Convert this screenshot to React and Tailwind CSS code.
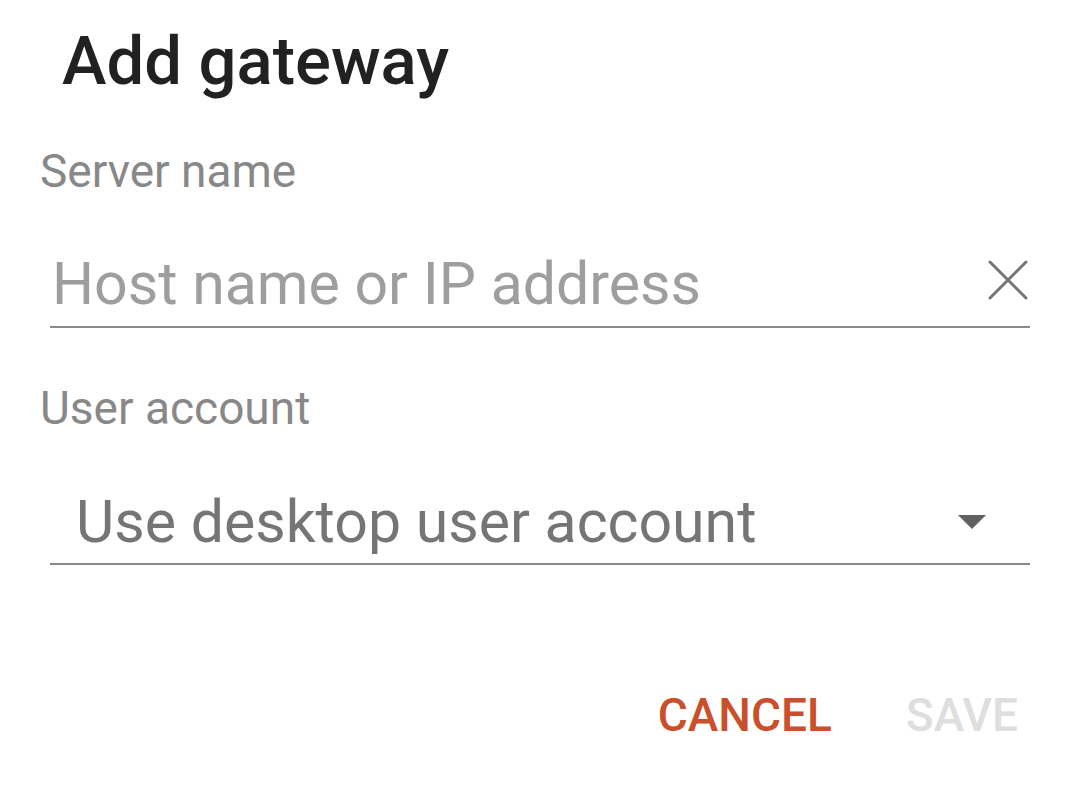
function ClearIcon() {
  return (
    <svg viewBox="0 0 40 40" className="h-[40px] w-[40px]" fill="none" stroke="#757575" strokeWidth="3" strokeLinecap="round">
      <path d="M2 2 L38 38 M38 2 L2 38" />
    </svg>
  )
}

function Caret() {
  return (
    <svg viewBox="0 0 28 14" className="h-[14px] w-[28px]" fill="#616161">
      <path d="M0 0 H28 L14 14 Z" />
    </svg>
  )
}

export default function App() {
  return (
    <div className="min-h-[796px] w-[1084px] bg-white font-['Roboto','Liberation_Sans',sans-serif]">
      <div className="flex flex-col pl-[40px] pr-[54px] pt-[28px]">
        <h1 className="ml-[22px] text-[67px] font-medium leading-[67px] text-[#212121]">
          Add gateway
        </h1>

        <label className="mt-[53px] text-[46px] leading-[46px] text-[#888888]">Server name</label>
        <div className="mt-[60px] ml-[10px] flex items-center justify-between border-b-2 border-[#8a8a8a] pb-[13px]">
          <span className="ml-[2px] text-[59px] leading-[59px] text-[#9e9e9e]">Host name or IP address</span>
          <span className="mr-[2px] -mt-[8px]">
            <ClearIcon />
          </span>
        </div>

        <label className="mt-[57px] text-[46px] leading-[46px] text-[#888888]">User account</label>
        <div className="mt-[61px] ml-[10px] flex items-center justify-between border-b-2 border-[#8a8a8a] pb-[12px]">
          <span className="ml-[26px] text-[59px] leading-[59px] text-[#757575]">Use desktop user account</span>
          <span className="mr-[44px]">
            <Caret />
          </span>
        </div>

        <div className="mt-[127px] flex justify-end gap-[74px] pr-[12px]">
          <button type="button" className="text-[46px] font-medium leading-[46px] text-[#c9502b]">
            CANCEL
          </button>
          <button type="button" disabled className="text-[46px] font-medium leading-[46px] text-[#dedede]">
            SAVE
          </button>
        </div>
      </div>
    </div>
  )
}
